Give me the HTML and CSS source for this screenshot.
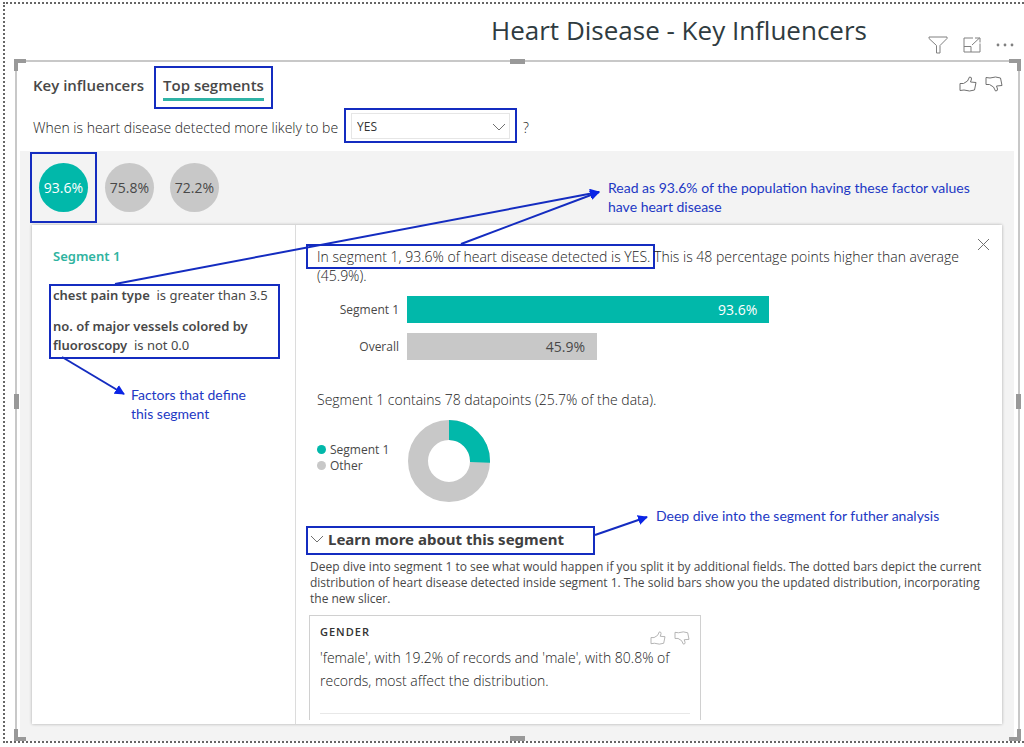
FILE: index.html
```
<!DOCTYPE html>
<html lang="en">
	<head>
		<meta charset="UTF-8">
		<title>Heart Disease - Key Influencers</title>
		<link rel="stylesheet" href="styles.css">
	</head>
	<body>
		<svg class="defs" width="0" height="0" aria-hidden="true">
			<symbol id="thumb" viewBox="0 0 18 16">
				<path d="M1 7.5H4.5L8.5 5L10.5 1L12.2 1.5L12.5 3L11.5 6L17 6.5L15.5 14L10.5 15L5 14L1 14.5Z"/>
			</symbol>
			<symbol id="chevron" viewBox="0 0 14 8">
				<path d="M1 1L7 7L13 1"/>
			</symbol>
		</svg>
		<div id="wrap">
			<header>
				<h1>Heart Disease - Key Influencers</h1>
				<div class="tools">
					<button aria-label="Filters">
						<svg width="20" height="18" viewBox="0 0 20 18"><path d="M1 1H19V2.5L12 9.5V17H8.5V9.5L1 2.5Z"/></svg>
					</button>
					<button aria-label="Focus mode">
						<svg width="18" height="16" viewBox="0 0 18 16"><path d="M10 1H1V15H17V6.5M1 9.5H8V15M9 8L16.5 1M12 1H17V5.5"/></svg>
					</button>
					<button aria-label="More options">
						<svg class="dots" width="18" height="4" viewBox="0 0 18 4"><circle cx="2" cy="2" r="1.4"/><circle cx="9" cy="2" r="1.4"/><circle cx="16" cy="2" r="1.4"/></svg>
					</button>
				</div>
			</header>
			<main class="visual">
				<i class="handle tl"></i><i class="handle tm"></i><i class="handle tr"></i>
				<i class="handle ml"></i><i class="handle mr"></i>
				<i class="handle bl"></i><i class="handle bm"></i><i class="handle br"></i>

				<div class="top">
					<nav class="tabs">
						<button class="tab">Key influencers</button>
						<div class="mark"><button class="tab on">Top segments</button></div>
					</nav>
					<div class="rate">
						<button aria-label="Like"><svg width="18" height="16"><use href="#thumb"/></svg></button>
						<button aria-label="Dislike"><svg class="down" width="18" height="16"><use href="#thumb"/></svg></button>
					</div>
				</div>

				<div class="question">
					<label for="answer">When is heart disease detected more likely to be</label>
					<div class="mark">
						<div class="drop">
							<select id="answer"><option>YES</option><option>NO</option></select>
							<svg width="14" height="8"><use href="#chevron"/></svg>
						</div>
					</div>
					<span>?</span>
				</div>

				<section class="panel">
					<div class="segments">
						<div class="mark"><button class="bubble on">93.6%</button></div>
						<button class="bubble">75.8%</button>
						<button class="bubble">72.2%</button>
					</div>
					<div class="card">
						<aside>
							<h2>Segment 1</h2>
							<div class="mark factors">
								<p><b>chest pain type</b> &nbsp;is greater than 3.5</p>
								<p><b>no. of major vessels colored by fluoroscopy</b> &nbsp;is not 0.0</p>
							</div>
						</aside>
						<article>
							<button class="close" aria-label="Close">
								<svg width="13" height="13" viewBox="0 0 13 13"><path d="M1 1L12 12M12 1L1 12"/></svg>
							</button>
							<p class="summary"><span class="mark hl">In segment 1, 93.6% of heart disease detected is YES.</span> This is 48 percentage points higher than average (45.9%).</p>
							<div class="bars">
								<span>Segment 1</span>
								<div class="track"><div class="bar on" style="width:93.6%">93.6%</div></div>
								<span>Overall</span>
								<div class="track"><div class="bar" style="width:49.1%">45.9%</div></div>
							</div>
							<p class="count">Segment 1 contains 78 datapoints (25.7% of the data).</p>
							<div class="share">
								<ul>
									<li class="on">Segment 1</li>
									<li>Other</li>
								</ul>
								<svg width="82" height="82" viewBox="0 0 82 82">
									<circle class="ring" cx="41" cy="41" r="31" pathLength="100"/>
									<circle class="ring on" cx="41" cy="41" r="31" pathLength="100" transform="rotate(-90 41 41)"/>
								</svg>
							</div>
							<div class="more">
								<button class="mark learn"><svg width="14" height="8"><use href="#chevron"/></svg>Learn more about this segment</button>
								<p>Deep dive into segment 1 to see what would happen if you split it by additional fields. The dotted bars depict the current distribution of heart disease detected inside segment 1. The solid bars show you the updated distribution, incorporating the new slicer.</p>
								<div class="field">
									<div class="field-head">
										<h3>GENDER</h3>
										<div class="rate small">
											<button aria-label="Like"><svg width="16" height="14"><use href="#thumb"/></svg></button>
											<button aria-label="Dislike"><svg class="down" width="16" height="14"><use href="#thumb"/></svg></button>
										</div>
									</div>
									<p>'female', with 19.2% of records and 'male', with 80.8% of records, most affect the distribution.</p>
									<hr>
								</div>
							</div>
						</article>
					</div>
				</section>
			</main>

			<!-- notes and arrows drawn over the report -->
			<svg class="arrows" width="700" height="560" aria-hidden="true">
				<defs>
					<marker id="head" viewBox="0 0 10 10" refX="9" refY="5" markerWidth="10" markerHeight="10" markerUnits="userSpaceOnUse" orient="auto">
						<path d="M0 0L10 5L0 10Z"/>
					</marker>
				</defs>
				<line x1="115" y1="284" x2="599" y2="192"/>
				<line x1="461" y1="244" x2="599" y2="192"/>
				<line x1="62" y1="357" x2="124" y2="394"/>
				<line x1="595" y1="535" x2="647" y2="517"/>
			</svg>
			<p class="note read">Read as 93.6% of the population having these factor values<br>have heart disease</p>
			<p class="note define">Factors that define<br>this segment</p>
			<p class="note dive">Deep dive into the segment for futher analysis</p>
		</div>
	</body>
</html>
```
FILE: styles.css
```
*{
	margin: 0;
	padding: 0;
	box-sizing: border-box;
}
body{
	padding: 2px 0 0 3px;
	background: #fff;
	color: #484848;
	font: 14px/19px "Open Sans", "Noto Sans", sans-serif;
}
button{
	border: 0;
	background: none;
	color: inherit;
	font: inherit;
	cursor: pointer;
}
svg{
	display: block;
	fill: none;
	stroke: #707070;
}
.defs{
	position: absolute;
}
#wrap{
	border: 2px dotted #666;
	border-right: 0;
	padding: 0 4px 0 10px;
}
.mark{
	border: 2px solid #142cc0;
}
header{
	display: flex;
	justify-content: flex-end;
	height: 56px;
	padding: 6px 6px 0 0;
}
h1{
	margin-right: 61px;
	color: #2f3b40;
	font-size: 26px;
	font-weight: 400;
	line-height: 40px;
}
.tools{
	display: flex;
	align-items: center;
	gap: 15px;
	padding-top: 20px;
}
.tools svg{
	stroke: #808080;
}
.tools .dots{
	fill: #808080;
	stroke: none;
}
.visual{
	position: relative;
	border: 2px solid #c8c8c8;
	border-bottom: 0;
	padding: 4px 4px 0 3px;
}
.handle{
	position: absolute;
	width: 12px;
	height: 12px;
	border: 0 solid #999;
}
.tl{ top: -3px; left: -3px; border-width: 4px 0 0 4px; }
.tr{ top: -3px; right: -3px; border-width: 4px 4px 0 0; }
.bl{ bottom: 0; left: -3px; border-width: 0 0 4px 4px; }
.br{ bottom: 0; right: -3px; border-width: 0 4px 4px 0; }
.tm, .bm{
	left: 50%;
	width: 15px;
	height: 5px;
	margin-left: -8px;
	background: #999;
}
.ml, .mr{
	top: 50%;
	width: 5px;
	height: 15px;
	margin-top: -8px;
	background: #999;
}
.tm{ top: -3px; }
.bm{ bottom: 0; }
.ml{ left: -3px; }
.mr{ right: -3px; }
.top{
	display: flex;
	justify-content: space-between;
	padding: 0 11px 0 13px;
}
.tabs{
	display: flex;
	gap: 10px;
}
.tab{
	height: 38px;
	font-size: 15px;
	font-weight: 600;
}
.tabs .mark{
	height: 43px;
	padding: 0 7px;
}
.tab.on{
	border-bottom: 3px solid #2fb3a6;
	height: 33px;
	padding-top: 4px;
}
.rate{
	display: flex;
	align-items: center;
	gap: 8px;
	height: 36px;
}
.down{
	transform: scaleY(-1);
}
.question{
	display: flex;
	align-items: center;
	gap: 6px;
	margin-top: -1px;
	padding-left: 13px;
}
.question label, .question span{
	padding-top: 4px;
}
.question .mark{
	padding: 3px 5px 2px;
}
.question, .summary, .count, .field p{
	color: #222;
	font-weight: 300;
}
.drop{
	position: relative;
}
.drop select{
	display: block;
	width: 159px;
	height: 26px;
	padding-left: 5px;
	border: 1px solid #e6e6e6;
	appearance: none;
	background: #fff;
	color: #333;
	font: 12px "Open Sans", "Noto Sans", sans-serif;
}
.drop svg{
	position: absolute;
	top: 10px;
	right: 4px;
	pointer-events: none;
}
.panel{
	margin-top: 8px;
	padding: 1px 12px 17px;
	background: #f3f3f3;
}
.segments{
	display: flex;
	align-items: center;
	margin-left: -2px;
}
.segments .mark{
	margin-right: 8px;
	padding: 9px 7px;
}
.bubble{
	display: block;
	width: 49px;
	height: 49px;
	margin-right: 16px;
	border-radius: 50%;
	background: #c8c8c8;
}
.bubble.on{
	margin: 0;
	background: #01b8aa;
	color: #fff;
}
.card{
	display: flex;
	margin-top: 2px;
	background: #fff;
	box-shadow: 0 0 3px rgba(0,0,0,0.3);
}
aside{
	flex: 0 0 264px;
	padding: 22px 15px 0 17px;
	border-right: 1px solid #dcdcdc;
}
h2{
	padding-left: 4px;
	color: #2fb3a0;
	font: 600 13px/19px "Noto Sans", sans-serif;
}
.factors{
	margin-top: 18px;
	padding: 0 2px 2px;
	font: 13px/19px "Noto Sans", sans-serif;
}
.factors p + p{
	margin-top: 12px;
}
b{
	font-weight: 600;
}
article{
	position: relative;
	flex: 1;
	padding: 22px 34px 4px 21px;
}
.close{
	position: absolute;
	top: 13px;
	right: 12px;
}
.hl{
	margin: 0 -5px 0 -11px;
	padding: 1px 3px 1px 9px;
}
.bars{
	display: grid;
	grid-template-columns: 82px 387px;
	gap: 10px 8px;
	align-items: center;
	margin-top: 11px;
	font-size: 12px;
	text-align: right;
}
.bar{
	height: 27px;
	padding-right: 12px;
	background: #c8c8c8;
	font-size: 14px;
	line-height: 28px;
}
.bar.on{
	background: #01b8aa;
	color: #fff;
}
.count{
	margin-top: 30px;
}
.share{
	display: flex;
	align-items: center;
	gap: 20px;
	margin-top: 11px;
}
.share ul{
	width: 71px;
	padding-bottom: 7px;
	list-style: none;
	font-size: 12px;
	line-height: 16px;
	white-space: nowrap;
}
.share li::before{
	content: "";
	display: inline-block;
	width: 9px;
	height: 9px;
	margin-right: 4px;
	border-radius: 50%;
	background: #c8c8c8;
}
.share li.on::before{
	background: #01b8aa;
}
.ring{
	stroke: #c8c8c8;
	stroke-width: 20;
}
.ring.on{
	stroke: #01b8aa;
	stroke-dasharray: 25.7 100;
}
.more{
	margin: 24px 0 0 -11px;
	font-size: 12px;
	line-height: 16px;
}
.learn{
	display: flex;
	align-items: center;
	gap: 4px;
	width: 289px;
	height: 29px;
	padding: 0 2px 4px;
	color: #404040;
	font-family: "Noto Sans", sans-serif;
	font-size: 15px;
	font-weight: 700;
}
.more > p{
	margin-right: -20px;
	padding: 4px 0 0 4px;
}
.field{
	width: 392px;
	margin: 8px 0 0 3px;
	padding: 8px 10px 6px;
	border: 1px solid #d0d0d0;
	border-bottom: 0;
}
.field-head{
	display: flex;
	align-items: flex-start;
	justify-content: space-between;
	height: 22px;
}
h3{
	color: #333;
	font-size: 11px;
	font-weight: 600;
	line-height: 16px;
	letter-spacing: 1px;
}
.small{
	height: 28px;
}
.small svg{
	stroke: #aaa;
}
.field p{
	font-size: 14px;
	line-height: 23px;
}
hr{
	margin-top: 21px;
	border: 0;
	border-top: 1px solid #e8e8e8;
}
.arrows{
	position: absolute;
	top: 0;
	left: 0;
	pointer-events: none;
}
.arrows line{
	stroke: #142cc0;
	stroke-width: 2;
	marker-end: url(#head);
}
.arrows path{
	fill: #0a24e6;
	stroke: none;
}
.note{
	position: absolute;
	color: #2238c4;
	font: 14px/19px Lato, sans-serif;
}
.read{ top: 178px; left: 608px; }
.define{ top: 385px; left: 131px; }
.dive{ top: 506px; left: 656px; }
```
